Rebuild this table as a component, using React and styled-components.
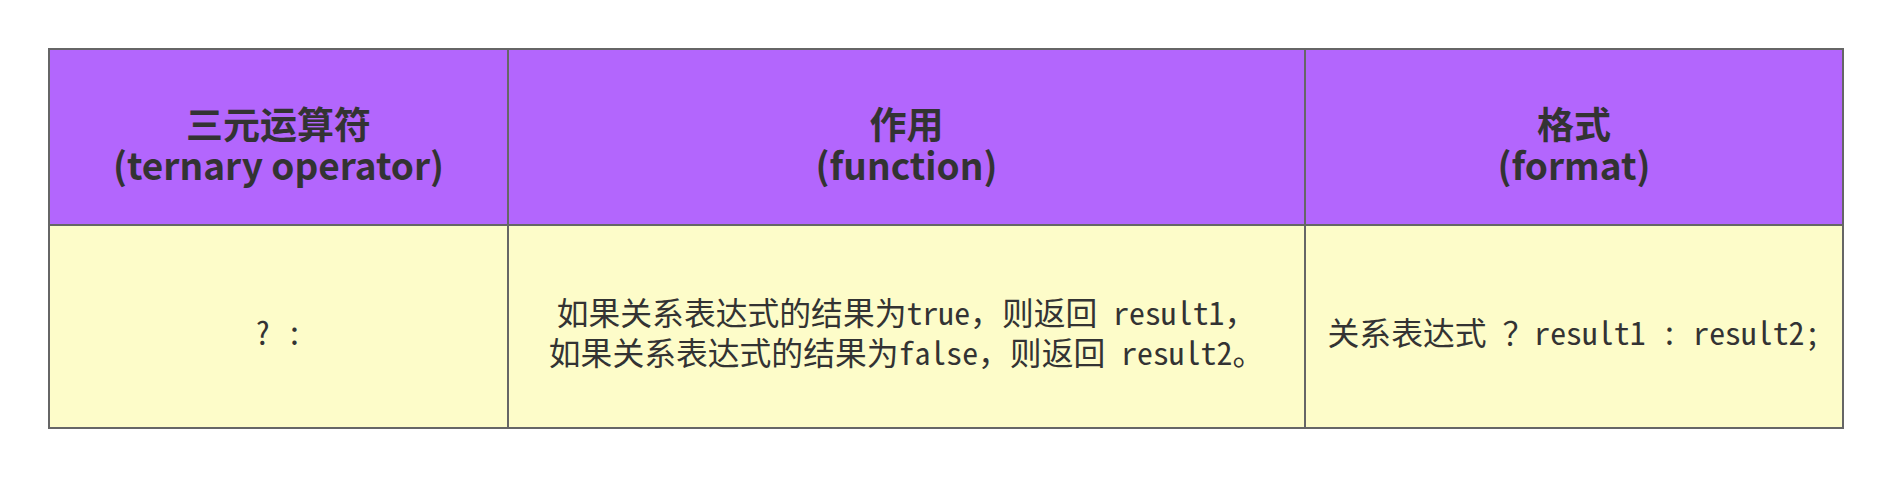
import React from "react";
import styled, { createGlobalStyle } from "styled-components";

const GlobalStyle = createGlobalStyle`
  html, body {
    margin: 0;
    padding: 0;
    background: #ffffff;
  }
`;

const Page = styled.div`
  width: 1894px;
  height: 478px;
  box-sizing: border-box;
  padding: 48px 0 0 48px;
  background: #ffffff;
`;

const Table = styled.div`
  display: grid;
  grid-template-columns: 457px 795px 536px;
  grid-template-rows: 174px 201px;
  gap: 2px;
  width: 1796px;
  box-sizing: border-box;
  border: 2px solid #666666;
  background: #666666;
`;

const HeadCell = styled.div`
  display: flex;
  flex-direction: column;
  align-items: center;
  justify-content: center;
  padding-top: 14px;
  background: #b366fd;
  color: #333333;
  font-family: "Noto Sans CJK SC", "Noto Sans", sans-serif;
  font-weight: 700;
  font-size: 37px;
  line-height: 41px;
  text-align: center;
`;

const BodyCell = styled.div`
  display: flex;
  flex-direction: column;
  align-items: center;
  justify-content: center;
  padding-top: 8px;
  background: #fdfcc9;
  color: #333333;
  font-family: "Noto Sans Mono CJK SC", "Noto Sans CJK SC", monospace;
  font-weight: 400;
  font-size: 31.8px;
  line-height: 40px;
  text-align: center;
  white-space: pre;
`;

const Line = styled.span`
  display: block;
`;

const headers = [
  ["三元运算符", "(ternary operator)"],
  ["作用", "(function)"],
  ["格式", "(format)"],
];

const body = [
  ["? :"],
  ["如果关系表达式的结果为true，则返回 result1，", "如果关系表达式的结果为false，则返回 result2。"],
  ["关系表达式 ？result1 : result2;"],
];

export default function App() {
  return (
    <>
      <GlobalStyle />
      <Page>
        <Table>
          {headers.map((lines, i) => (
            <HeadCell key={`h${i}`}>
              {lines.map((t) => (
                <Line key={t}>{t}</Line>
              ))}
            </HeadCell>
          ))}
          {body.map((lines, i) => (
            <BodyCell key={`b${i}`}>
              {lines.map((t) => (
                <Line key={t}>{t}</Line>
              ))}
            </BodyCell>
          ))}
        </Table>
      </Page>
    </>
  );
}
